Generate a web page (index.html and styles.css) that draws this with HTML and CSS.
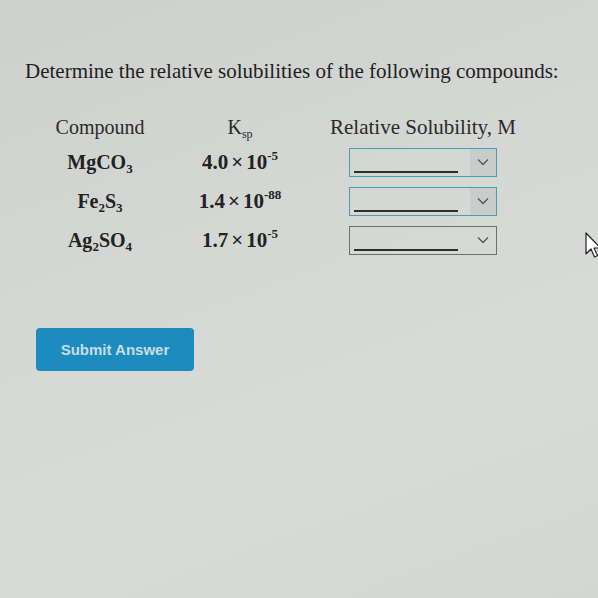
FILE: index.html
```html
<!DOCTYPE html>
<html>
<head>
<meta charset="utf-8">
<link rel="stylesheet" href="styles.css">
</head>
<body>
<div class="page">
  <p class="prompt">Determine the relative solubilities of the following compounds:</p>
  <div class="grid">
    <div class="hd c1">Compound</div>
    <div class="hd c2">K<sub class="ksub">sp</sub></div>
    <div class="hd c3">Relative Solubility, M</div>

    <div class="cell c1 b">MgCO<sub>3</sub></div>
    <div class="cell c2 b num">4.0<span class="x">×</span>10<sup>-5</sup></div>
    <div class="cell c3"><div class="sel focus"><span class="line"></span><span class="arrow shade"><svg width="12" height="8" viewBox="0 0 12 8"><path d="M1 1.5 L6 6.5 L11 1.5" fill="none" stroke="#555" stroke-width="1.3"/></svg></span></div></div>

    <div class="cell c1 b">Fe<sub>2</sub>S<sub>3</sub></div>
    <div class="cell c2 b num">1.4<span class="x">×</span>10<sup>-88</sup></div>
    <div class="cell c3"><div class="sel focus"><span class="line"></span><span class="arrow shade"><svg width="12" height="8" viewBox="0 0 12 8"><path d="M1 1.5 L6 6.5 L11 1.5" fill="none" stroke="#555" stroke-width="1.3"/></svg></span></div></div>

    <div class="cell c1 b">Ag<sub>2</sub>SO<sub>4</sub></div>
    <div class="cell c2 b num">1.7<span class="x">×</span>10<sup>-5</sup></div>
    <div class="cell c3"><div class="sel"><span class="line"></span><span class="arrow"><svg width="12" height="8" viewBox="0 0 12 8"><path d="M1 1.5 L6 6.5 L11 1.5" fill="none" stroke="#555" stroke-width="1.3"/></svg></span></div></div>
  </div>
  <button class="submit">Submit Answer</button>
</div>
<svg class="cursor" width="16" height="28" viewBox="0 0 16 28"><path d="M1 1 L1 22 L6 17 L9.5 25 L12.5 23.5 L9 16 L15.5 16 Z" fill="#fff" stroke="#222" stroke-width="1.2" stroke-linejoin="round"/></svg>
</body>
</html>
```
FILE: styles.css
```css
html, body {
  margin: 0;
  padding: 0;
  width: 598px;
  height: 598px;
  overflow: hidden;
}
body {
  background: linear-gradient(160deg, #cdd0cd 0%, #d5d7d4 40%, #d9dbd8 70%, #d4d6d3 100%);
  font-family: "Liberation Serif", "Times New Roman", serif;
  color: #222;
  position: relative;
}
.page {
  padding: 58px 0 0 25px;
}
.prompt {
  margin: 0;
  font-size: 21px;
  line-height: 26px;
  color: #1e1e1e;
}
.grid {
  display: grid;
  grid-template-columns: 120px 160px 206px;
  grid-template-rows: 32px 39px 39px 39px;
  margin: 27px 0 0 15px;
  align-items: center;
}
.hd, .cell {
  text-align: center;
  font-size: 20px;
  color: #2a2a2a;
}
.hd.c3 { font-size: 21px; }
.b { font-weight: bold; color: #222; }
.num { font-size: 21px; }
.num .x { margin: 0 3px; }
sub { font-size: 13px; vertical-align: -4px; line-height: 0; }
.ksub { font-size: 12px; }
sup { font-size: 13px; vertical-align: 9px; line-height: 0; }
.c3 { display: flex; justify-content: center; }
.sel {
  width: 146px;
  height: 27px;
  border: 1px solid #6c6f70;
  display: flex;
  align-items: flex-end;
  justify-content: space-between;
  margin-top: -1px;
  box-sizing: content-box;
}
.sel.focus { border-color: #4a9db3; }
.line {
  width: 104px;
  height: 2px;
  background: #2e2e2e;
  margin: 0 0 3px 4px;
}
.arrow {
  align-self: stretch;
  width: 26px;
  display: flex;
  align-items: center;
  justify-content: center;
}
.arrow.shade { background: #cacccb; }
.submit {
  display: block;
  margin: 68px 0 0 11px;
  width: 158px;
  height: 43px;
  border: none;
  border-radius: 4px;
  background: #1c8cbe;
  color: #c9dde6;
  font-family: "Liberation Sans", Arial, sans-serif;
  font-weight: bold;
  font-size: 15px;
  padding: 0;
}
.cursor {
  position: absolute;
  left: 585px;
  top: 232px;
}
```
